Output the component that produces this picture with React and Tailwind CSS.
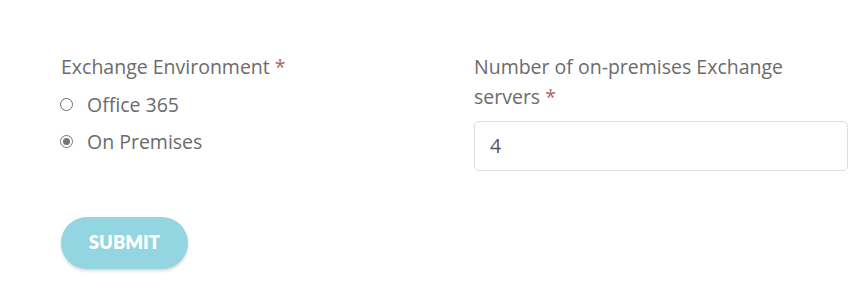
export default function App() {
  return (
    <div className="min-h-[303px] w-[863px] bg-white font-['Open_Sans',sans-serif] text-[#6b6b6b]">
      <div className="flex pt-[52px] pl-[61px]">
        {/* left column */}
        <div className="w-[413px]">
          <div className="text-[19.5px] leading-[29px]">
            Exchange Environment <span className="text-[#b5625d]">*</span>
          </div>
          <div className="mt-[9px] flex flex-col gap-[8px]">
            <label className="flex items-center text-[19.5px] leading-[29px]">
              <span className="-ml-px mr-[14px] h-[13px] w-[13px] rounded-full border border-[#6b6b6b] bg-white" />
              Office 365
            </label>
            <label className="flex items-center text-[19.5px] leading-[29px]">
              <span className="-ml-px mr-[14px] flex h-[13px] w-[13px] items-center justify-center rounded-full border border-[#777] bg-white">
                <span className="h-[7px] w-[7px] rounded-full bg-[#777]" />
              </span>
              On Premises
            </label>
          </div>
        </div>
        {/* right column */}
        <div className="w-[374px]">
          <div className="text-[19.5px] leading-[29.5px]">
            Number of on-premises Exchange servers <span className="text-[#b5625d]">*</span>
          </div>
          <div className="mt-[10px] flex h-[50px] items-center rounded-[5px] border border-[#dedede] bg-white px-[15px] text-[19.5px] text-[#555]">
            4
          </div>
        </div>
      </div>
      <div className="pl-[61px] pt-[46px]">
        <button className="h-[52px] w-[127px] rounded-full bg-[#93d5e0] font-['Lato',sans-serif] text-[18.5px] font-extrabold text-white shadow-[0_2px_3px_rgba(0,0,0,0.15)]">
          SUBMIT
        </button>
      </div>
    </div>
  );
}
